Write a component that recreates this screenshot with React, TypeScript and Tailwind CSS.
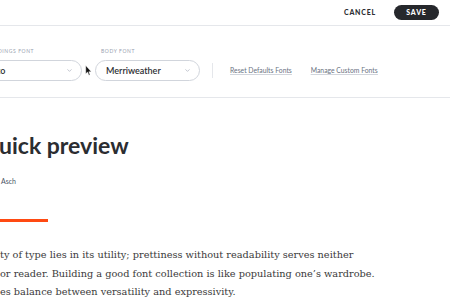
import React from 'react';
import { ChevronDown } from 'lucide-react';

const ui = { fontFamily: 'Lato, "Open Sans", sans-serif' };
const serif = { fontFamily: '"DejaVu Serif", "Liberation Serif", serif' };

const FontSelect: React.FC<{ label: string; value: string; width: string; labelPad: string; textPad: string }> = ({ label, value, width, labelPad, textPad }) => (
  <div className={`flex flex-col ${width}`}>
    <span className={`text-[5px] uppercase tracking-[0.6px] text-gray-400 leading-none mb-[6px] ${labelPad}`}>{label}</span>
    <div className={`h-[21px] rounded-full border border-gray-300 bg-white flex items-center justify-between pr-[8px] ${textPad}`}>
      <span className="text-[9px] font-semibold text-[#2d2f33]">{value}</span>
      <ChevronDown size={7} strokeWidth={2} className="text-gray-400" />
    </div>
  </div>
);

export default function App() {
  return (
    <div className="w-[450px] h-[307px] overflow-hidden bg-white" style={ui}>
      {/* top bar */}
      <div className="h-[26px] border-b border-gray-200 flex items-center justify-end pr-[11px]">
        <button className="text-[7px] font-black tracking-[0.8px] text-[#2d2f33] mr-[18px]">CANCEL</button>
        <button className="h-[15px] w-[45px] rounded-full bg-[#26282c] text-white text-[7px] font-black tracking-[0.8px]">SAVE</button>
      </div>

      {/* font toolbar */}
      <div className="h-[72px] border-b border-gray-200 flex items-end pb-[16px]">
        <div className="flex items-end -ml-[25px]">
          <FontSelect label="Headings font" value="Lato" width="w-[107px]" labelPad="pl-[11px]" textPad="pl-[12px]" />
          <div className="relative w-[13px] self-stretch">
            <svg className="absolute left-[3px] top-[16px]" width="7" height="11" viewBox="0 0 6 10">
              <path d="M0.5 0.5 L0.5 8 L2.2 6.4 L3.4 9.3 L4.4 8.9 L3.3 6.1 L5.5 6.1 Z" fill="#111" stroke="#fff" strokeWidth="0.4" />
            </svg>
          </div>
          <FontSelect label="Body font" value="Merriweather" width="w-[105px]" labelPad="pl-[6px]" textPad="pl-[10px]" />
          <div className="ml-[12px] mb-[3px] h-[15px] w-px bg-gray-200" />
          <div className="ml-[17px] mb-[6px] flex gap-[19px] text-[6.8px] text-gray-500 underline underline-offset-1 decoration-gray-300">
            <a>Reset Defaults Fonts</a>
            <a>Manage Custom Fonts</a>
          </div>
        </div>
      </div>

      {/* preview */}
      <div className="pt-[36px]">
        <h1 className="text-[23px] font-bold leading-none text-[#2b2d31] -ml-[1px]">uick preview</h1>
        <p className="mt-[21px] text-[7px] text-gray-600 leading-none ml-[1px]">Asch</p>
        <div className="mt-[34px] h-[3px] w-[48px] bg-[#ff4a12]" />
        <div className="mt-[24px] text-[9.75px] leading-[18.6px] text-[#3a3a3a] whitespace-nowrap" style={serif}>
          <div>ty of type lies in its utility; prettiness without readability serves neither</div>
          <div>or reader. Building a good font collection is like populating one’s wardrobe.</div>
          <div>es balance between versatility and expressivity.</div>
        </div>
      </div>
    </div>
  );
}
